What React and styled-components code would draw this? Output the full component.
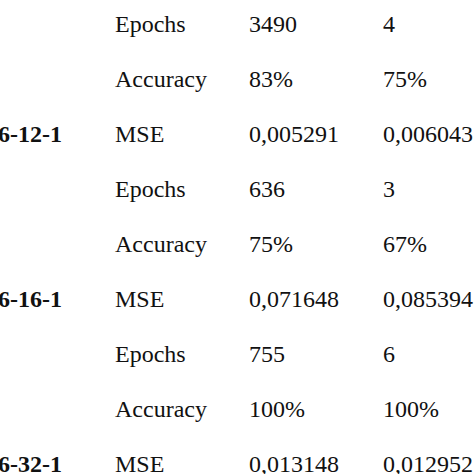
import React from "react";
import styled, { createGlobalStyle } from "styled-components";

const Global = createGlobalStyle`
  html, body { margin: 0; padding: 0; background: #ffffff; overflow: hidden; }
  body { width: 474px; height: 474px; }
`;

const Table = styled.div`
  display: grid;
  grid-template-columns: 117px 134px 134px 160px;
  grid-auto-rows: 55.1px;
  margin: -3.3px 0 0 -2px;
  font-family: "Liberation Serif", "Times New Roman", serif;
  font-size: 24px;
  color: #111;
  white-space: nowrap;
`;

const Cell = styled.div`
  line-height: 55.1px;
  font-weight: ${(p) => (p.$bold ? 700 : 400)};
`;

const rows = [
  ["", "Epochs", "3490", "4"],
  ["", "Accuracy", "83%", "75%"],
  ["6-12-1", "MSE", "0,005291", "0,006043"],
  ["", "Epochs", "636", "3"],
  ["", "Accuracy", "75%", "67%"],
  ["6-16-1", "MSE", "0,071648", "0,085394"],
  ["", "Epochs", "755", "6"],
  ["", "Accuracy", "100%", "100%"],
  ["6-32-1", "MSE", "0,013148", "0,012952"],
];

export default function App() {
  return (
    <>
      <Global />
      <Table>
        {rows.map((r, i) => (
          <React.Fragment key={i}>
            <Cell $bold>{r[0]}</Cell>
            <Cell>{r[1]}</Cell>
            <Cell>{r[2]}</Cell>
            <Cell>{r[3]}</Cell>
          </React.Fragment>
        ))}
      </Table>
    </>
  );
}
